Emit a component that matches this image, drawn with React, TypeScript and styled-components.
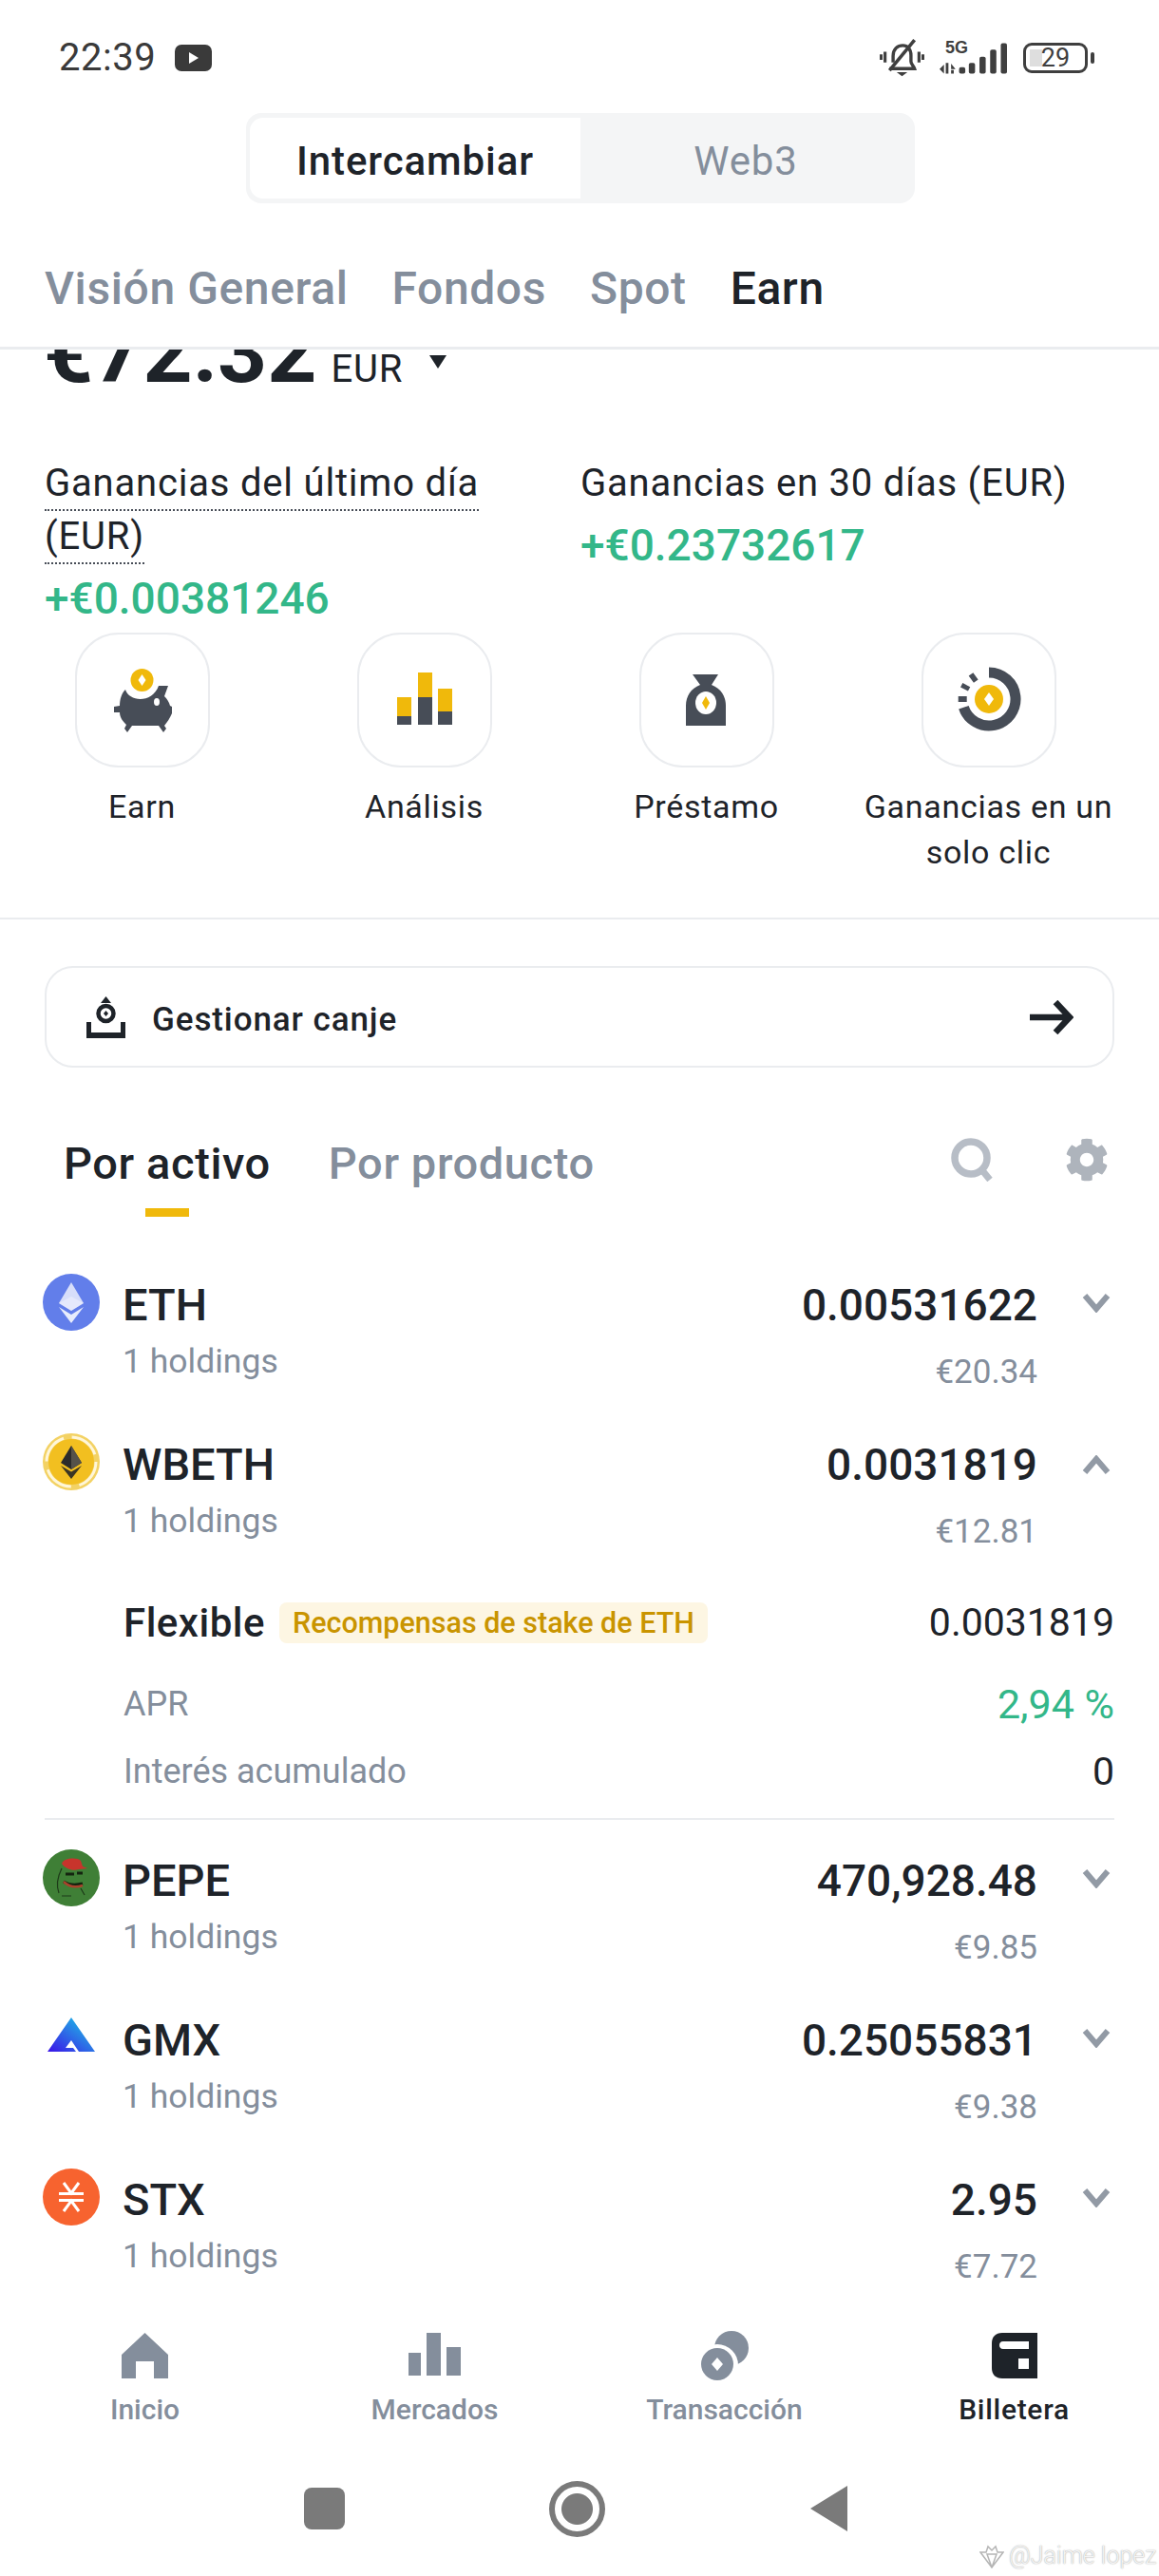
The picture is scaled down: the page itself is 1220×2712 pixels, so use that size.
import React, { FC } from 'react'
import styled, { createGlobalStyle } from 'styled-components'
import { FaCog } from 'react-icons/fa'

const GlobalStyle = createGlobalStyle`
  html, body { margin:0; padding:0; background:#fff; }
  body { font-family:Roboto,"Noto Sans",sans-serif; color:#1e2329; }
  * { box-sizing:border-box; }
`

const DARK = '#474d57'
const YELLOW = '#f0b90b'
const GREEN = '#33b789'

/* ---------- status bar icons ---------- */
const PlayBadge = () => (
  <svg width="39" height="28" viewBox="0 0 39 28">
    <rect width="39" height="28" rx="7" fill="#3a3a3a" />
    <path d="M15 8 L25 14 L15 20Z" fill="#fff" />
  </svg>
)

const MutedBell = () => (
  <svg width="47" height="42" viewBox="0 0 50 42" fill="none" stroke="#3f3f3f">
    <path d="M15 26 V19 C15 11 20 7 26 7 C31 7 35 11 35 18 V25 C35 28 38 30 39 33 H11" strokeWidth="3.6" />
    <path d="M39 1 L11 35" strokeWidth="3.8" />
    <path d="M19 37 H31 L25 41.5Z" fill="#3f3f3f" stroke="none" />
    <path d="M6 14 V26 M1.5 17 V23 M44 14 V26 M48.5 17 V23" strokeWidth="3.4" />
  </svg>
)

const SignalIcon = () => (
  <svg width="71" height="33" viewBox="0 0 76 34" fill="#3f3f3f">
    <path d="M0 29 L5 24 V34Z M7 22 H10 V34 H7Z M13 23 L18 29 H13Z M13 30 H16 V34 H13Z" />
    <rect x="22" y="27" width="7" height="7" rx="2" />
    <rect x="33" y="22" width="7" height="12" rx="2" />
    <rect x="45" y="15" width="7" height="19" rx="2" />
    <rect x="57" y="7" width="7" height="27" rx="2" />
    <rect x="69" y="0" width="7" height="34" rx="2" />
  </svg>
)

/* ---------- action icons ---------- */
const PiggyIcon = () => (
  <svg width="96" height="96" viewBox="0 0 96 96">
    <path fill={DARK} d="M30 37 C34 50 58 52 65 33 L75 33 L71 44 C74 47 76 50 77 54 L79 55 L79 62 C77 67 74 71 71 75 L73 78 L70 82 L65 75 H37 L32 82 L29 78 L31 74 C27 70 24 66 24 61 L18 61 V55 L24 54 C24 47 26 41 30 37Z" />
    <ellipse cx="63" cy="50" rx="3" ry="4" fill="#fff" />
    <ellipse cx="47.5" cy="27" rx="12" ry="12" fill={YELLOW} />
    <path d="M47.5 21 L51.5 27 L47.5 33 L43.5 27Z" fill="#fff" />
  </svg>
)

const BarsIcon = () => (
  <svg width="96" height="96" viewBox="0 0 96 96">
    <rect x="19" y="45" width="15" height="20" fill={YELLOW} />
    <rect x="19" y="65" width="15" height="9" fill={DARK} />
    <rect x="41" y="19" width="15" height="26" fill={YELLOW} />
    <rect x="41" y="45" width="15" height="29" fill={DARK} />
    <rect x="62" y="36" width="15" height="24" fill={YELLOW} />
    <rect x="62" y="60" width="15" height="14" fill={DARK} />
  </svg>
)

const BagIcon = () => (
  <svg width="96" height="96" viewBox="0 0 96 96">
    <path fill={DARK} d="M33 21 H60 L53 32 C63 36 68 44 68 54 V75 H26 V54 C26 44 31 36 41 32Z" />
    <ellipse cx="47" cy="51" rx="11" ry="12" fill="#fff" />
    <path d="M47 44 L51 51 L47 58 L43 51Z" fill={YELLOW} />
  </svg>
)

const TargetIcon = () => (
  <svg width="96" height="96" viewBox="0 0 96 96" fill="none">
    <path d="M48 19 A28 28 0 1 1 21.4 55.7" stroke={DARK} strokeWidth="11" />
    <path d="M20.2 49.9 L20.2 44.1 M22 36.5 L24.3 32.2 M29.3 26.2 L34 22.8" stroke={DARK} strokeWidth="9" />
    <circle cx="48" cy="47" r="15" fill={YELLOW} />
    <path d="M48 40 L53 47 L48 54 L43 47Z" fill="#fff" />
  </svg>
)

const RedeemIcon = () => (
  <svg width="42" height="44" viewBox="0 0 42 44" fill="none">
    <path d="M20.5 0 L26 7 H15Z" fill="#1e2329" />
    <circle cx="20.5" cy="18" r="8" stroke="#1e2329" strokeWidth="4.5" />
    <path d="M20.5 15 L23 18 L20.5 21 L18 18Z" fill="#1e2329" />
    <path d="M0 27 H5 V38 H36 V27 H41 V44 H0Z" fill="#1e2329" />
  </svg>
)

const ArrowIcon = () => (
  <svg width="46" height="36" viewBox="0 0 46 36" fill="none" stroke="#1e2329" strokeWidth="6.5">
    <path d="M0 18 H41 M27 2 L42 18 L27 34" />
  </svg>
)

const SearchIcon = () => (
  <svg width="46" height="46" viewBox="0 0 46 46" fill="none" stroke="#b7bdc6">
    <circle cx="22" cy="21" r="17" strokeWidth="7.5" />
    <path d="M33 33 L42 44" strokeWidth="7" />
  </svg>
)

/* ---------- coin logos ---------- */
const EthCoin = () => (
  <svg width="60" height="60" viewBox="0 0 60 60">
    <circle cx="30" cy="30" r="30" fill="#627eea" />
    <path d="M30 9 L43 31 L30 39 L17 31Z" fill="#fff" opacity="0.75" />
    <path d="M30 24 L43 31 L30 39 L17 31Z" fill="#fff" opacity="0.35" />
    <path d="M17 35 L30 43 L43 35 L30 52Z" fill="#fff" opacity="0.85" />
  </svg>
)

const WbethCoin = () => (
  <svg width="60" height="60" viewBox="0 0 60 60">
    <circle cx="30" cy="30" r="30" fill="#f3d264" />
    <circle cx="30" cy="30" r="26" fill="none" stroke="#fff6d8" strokeWidth="3" strokeDasharray="32 8.8" />
    <circle cx="30" cy="30" r="24" fill="#f2bf20" />
    <path d="M30 13 L41 31 L30 38 L19 31Z" fill="#2b2b2b" />
    <path d="M30 13 L41 31 L30 38Z" fill="#55524a" />
    <path d="M19 34 L30 40.5 L41 34 L30 48Z" fill="#3a3524" />
  </svg>
)

const PepeCoin = () => (
  <svg width="60" height="60" viewBox="0 0 60 60">
    <circle cx="30" cy="30" r="30" fill="#3f7f36" />
    <path d="M20 15 C22 9 36 8 40 12 L42 18 L47 20 L38 21 C32 23 24 21 20 15Z" fill="#c8342c" />
    <path d="M24 26 H33 M36 25 H42 M22 34 C28 38 34 38 42 36" stroke="#14240f" strokeWidth="3" fill="none" />
    <path d="M22 34 C28 40 36 40 42 38" stroke="#a8432c" strokeWidth="2.5" fill="none" />
    <path d="M20 20 C15 30 14 38 17 46 M20 49 H30 M40 41 L44 48" stroke="#1d3a18" strokeWidth="1.2" fill="none" />
  </svg>
)

const GmxCoin = () => (
  <svg width="60" height="60" viewBox="0 0 60 60">
    <defs>
      <linearGradient id="gmxFill" x1="0" y1="1" x2="1" y2="0">
        <stop offset="0" stopColor="#3a12e8" />
        <stop offset="0.55" stopColor="#2a7ce6" />
        <stop offset="1" stopColor="#14d2e6" />
      </linearGradient>
    </defs>
    <path d="M30 9 L55 45 H38 L30 33 L24 41 H32 L35 45 H5Z" fill="url(#gmxFill)" />
  </svg>
)

const StxCoin = () => (
  <svg width="60" height="60" viewBox="0 0 60 60" fill="none" stroke="#fff" strokeWidth="3">
    <circle cx="30" cy="30" r="30" fill="#f7632f" stroke="none" />
    <path d="M17 26.5 H43 M17 33.5 H43 M22 15 L30 26 L38 15 M22 45 L30 34 L38 45" />
  </svg>
)

const Chevron: FC<{ up?: boolean }> = ({ up }) => (
  <svg width="30" height="20" viewBox="0 0 30 20" fill="none" stroke="#929aa5" strokeWidth="6">
    <path d={up ? 'M3 18 L15 4 L27 18' : 'M3 2 L15 16 L27 2'} />
  </svg>
)

/* ---------- bottom nav icons ---------- */
const HomeIcon = () => (
  <svg width="49" height="48" viewBox="0 0 49 48">
    <path d="M24.5 0 L49 23 V48 H34 V30 H15 V48 H0 V23Z" fill="#848e9c" />
  </svg>
)

const MarketsIcon = () => (
  <svg width="55" height="48" viewBox="0 0 55 48" fill="#848e9c">
    <rect x="0" y="21" width="13" height="24" />
    <rect x="19" y="0" width="15" height="45" />
    <rect x="40" y="15" width="15" height="30" />
  </svg>
)

const TradeIcon = () => (
  <svg width="51" height="52" viewBox="0 0 51 52">
    <circle cx="33" cy="18" r="18" fill="#848e9c" />
    <circle cx="18" cy="36" r="22" fill="#fff" />
    <circle cx="18" cy="35" r="17" fill="#848e9c" />
    <path d="M18 28 L24 35 L18 42 L12 35Z" fill="#fff" />
  </svg>
)

const WalletIcon = () => (
  <svg width="48" height="48" viewBox="0 0 48 48">
    <path d="M11 0 H48 V48 H11 C4 48 0 44 0 37 V11 C0 4 4 0 11 0Z" fill="#1e2329" />
    <path d="M12 9 H39 V17 H12 C9 17 8 15 8 13 C8 11 9 9 12 9Z" fill="#fff" />
    <rect x="28" y="27" width="11" height="11" fill="#fff" />
  </svg>
)

const assets = [
  { name: 'ETH', amount: '0.00531622', value: '€20.34', logo: <EthCoin /> },
  { name: 'WBETH', amount: '0.0031819', value: '€12.81', logo: <WbethCoin />, open: true },
  { name: 'PEPE', amount: '470,928.48', value: '€9.85', logo: <PepeCoin /> },
  { name: 'GMX', amount: '0.25055831', value: '€9.38', logo: <GmxCoin /> },
  { name: 'STX', amount: '2.95', value: '€7.72', logo: <StxCoin /> },
]

const actions = [
  { label: 'Earn', icon: <PiggyIcon /> },
  { label: 'Análisis', icon: <BarsIcon /> },
  { label: 'Préstamo', icon: <BagIcon /> },
  { label: 'Ganancias en un solo clic', icon: <TargetIcon /> },
]

const navItems = [
  { label: 'Inicio', icon: <HomeIcon /> },
  { label: 'Mercados', icon: <MarketsIcon /> },
  { label: 'Transacción', icon: <TradeIcon /> },
  { label: 'Billetera', icon: <WalletIcon />, active: true },
]

const App: FC = () => {
  return (
    <Page>
      <GlobalStyle />
      <StatusBar>
        <StatusLeft>
          <Clock>22:39</Clock>
          <PlayBadge />
        </StatusLeft>
        <StatusRight>
          <MutedBell />
          <SignalWrap>
            <FiveG>5G</FiveG>
            <SignalIcon />
          </SignalWrap>
          <Battery>
            <BatteryFill />
            <BatteryText>29</BatteryText>
          </Battery>
          <BatteryNub />
        </StatusRight>
      </StatusBar>

      <Segment>
        <SegmentItem $active>Intercambiar</SegmentItem>
        <SegmentItem>Web3</SegmentItem>
      </Segment>

      <MainTabs>
        <MainTab>Visión General</MainTab>
        <MainTab>Fondos</MainTab>
        <MainTab>Spot</MainTab>
        <MainTab $active>Earn</MainTab>
      </MainTabs>

      <Scroll>
        <Balance>
          <BalanceValue>€72.32</BalanceValue>
          <BalanceUnit>EUR</BalanceUnit>
          <Caret />
        </Balance>

        <Earnings>
          <EarningCol>
            <EarningLabel><Dotted>Ganancias del último día (EUR)</Dotted></EarningLabel>
            <EarningValue>+€0.00381246</EarningValue>
          </EarningCol>
          <EarningCol>
            <EarningLabel>Ganancias en 30 días (EUR)</EarningLabel>
            <EarningValue>+€0.23732617</EarningValue>
          </EarningCol>
        </Earnings>

        <Actions>
          {actions.map(a => (
            <Action key={a.label}>
              <ActionBox>{a.icon}</ActionBox>
              <ActionLabel>{a.label}</ActionLabel>
            </Action>
          ))}
        </Actions>

        <SectionLine />

        <RedeemCard>
          <RedeemLeft>
            <RedeemIcon />
            <RedeemText>Gestionar canje</RedeemText>
          </RedeemLeft>
          <ArrowIcon />
        </RedeemCard>

        <ListTabs>
          <ListTab>
            <ListTabText>Por activo</ListTabText>
            <TabMark />
          </ListTab>
          <ListTab>
            <ListTabText $muted>Por producto</ListTabText>
          </ListTab>
          <ListTools>
            <SearchIcon />
            <FaCog size={46} color="#aeb4bc" />
          </ListTools>
        </ListTabs>

        <AssetList>
          {assets.map(a => (
            <React.Fragment key={a.name}>
              <AssetRow>
                <LogoSlot>{a.logo}</LogoSlot>
                <AssetInfo>
                  <AssetName>{a.name}</AssetName>
                  <Holdings>1 holdings</Holdings>
                </AssetInfo>
                <AssetNumbers>
                  <AssetAmount>{a.amount}</AssetAmount>
                  <AssetValue>{a.value}</AssetValue>
                </AssetNumbers>
                <ChevronSlot $up={a.open}><Chevron up={a.open} /></ChevronSlot>
              </AssetRow>
              {a.open && (
                <Detail>
                  <DetailHead>
                    <FlexTitle>
                      <FlexName>Flexible</FlexName>
                      <Badge>Recompensas de stake de ETH</Badge>
                    </FlexTitle>
                    <DetailValue>0.0031819</DetailValue>
                  </DetailHead>
                  <DetailRow>
                    <DetailLabel>APR</DetailLabel>
                    <DetailValue $green>2,94 %</DetailValue>
                  </DetailRow>
                  <DetailRow>
                    <DetailLabel>Interés acumulado</DetailLabel>
                    <DetailValue>0</DetailValue>
                  </DetailRow>
                </Detail>
              )}
            </React.Fragment>
          ))}
        </AssetList>
      </Scroll>

      <BottomNav>
        {navItems.map(n => (
          <NavItem key={n.label}>
            <NavIcon>{n.icon}</NavIcon>
            <NavLabel $active={n.active}>{n.label}</NavLabel>
          </NavItem>
        ))}
      </BottomNav>

      <SystemNav>
        <SysKey><SysSquare /></SysKey>
        <SysKey><SysCircle /></SysKey>
        <SysKey>
          <svg width="40" height="48" viewBox="0 0 40 48"><path d="M39 0 V48 L0 24Z" fill="#7a7a7a" /></svg>
        </SysKey>
      </SystemNav>

      <Watermark>
        <svg width="26" height="26" viewBox="0 0 26 26" fill="none" stroke="#b5b5b5" strokeWidth="1.5">
          <path d="M13 25 L1 9 L7 9 L9 3 L13 7 L17 3 L19 9 L25 9Z M13 25 L8 11 H18Z" />
        </svg>
        <span>@Jaime lopez</span>
      </Watermark>
    </Page>
  )
}

export default App

const Page = styled.div`
  position:relative;
  width:1220px;
  height:2712px;
  overflow:hidden;
  background:#fff;
  display:flex;
  flex-direction:column;
`

const StatusBar = styled.div`
  height:119px;
  flex:none;
  padding:39px 68px 0 62px;
  display:flex;
  justify-content:space-between;
  align-items:flex-start;
`

const StatusLeft = styled.div`
  display:flex;
  align-items:center;
  gap:20px;
  height:44px;
`

const Clock = styled.span`
  font-size:40px;
  line-height:44px;
  letter-spacing:.5px;
  color:#3a3a3a;
`

const StatusRight = styled.div`
  display:flex;
  align-items:center;
  height:44px;
`

const SignalWrap = styled.div`
  position:relative;
  margin-left:16px;
  width:71px;
  height:33px;
`

const FiveG = styled.span`
  position:absolute;
  left:6px;
  top:-4px;
  font-family:"Liberation Sans",sans-serif;
  font-size:18px;
  line-height:18px;
  font-weight:700;
  color:#3f3f3f;
`

const Battery = styled.div`
  position:relative;
  margin-left:17px;
  width:68px;
  height:32px;
  border:3.5px solid #3f3f3f;
  border-radius:9px;
  display:flex;
  align-items:center;
  justify-content:center;
`

const BatteryFill = styled.div`
  position:absolute;
  left:4px;
  top:4px;
  bottom:4px;
  width:13px;
  background:#dedede;
`

const BatteryText = styled.span`
  position:relative;
  font-size:27px;
  line-height:25px;
  color:#3f3f3f;
`

const BatteryNub = styled.div`
  margin-left:3px;
  width:4px;
  height:12px;
  border-radius:2px;
  background:#3f3f3f;
`

const Segment = styled.div`
  flex:none;
  margin-left:259px;
  width:704px;
  height:95px;
  padding:5px 4px;
  background:#f4f5f6;
  border-radius:16px;
  display:grid;
  grid-template-columns:348px 348px;
`

const SegmentItem = styled.div<{ $active?: boolean }>`
  display:flex;
  align-items:center;
  justify-content:center;
  padding-top:6px;
  font-size:42px;
  letter-spacing:.9px;
  font-weight:${({ $active }) => ($active ? 500 : 400)};
  color:${({ $active }) => ($active ? '#1e2329' : '#848e9c')};
  background:${({ $active }) => ($active ? '#fff' : 'transparent')};
  border-radius:14px 0 0 14px;
`

const MainTabs = styled.div`
  flex:none;
  height:154px;
  padding:60px 0 0 47px;
  display:flex;
  gap:46px;
  border-bottom:3px solid #eaecef;
`

const MainTab = styled.div<{ $active?: boolean }>`
  font-size:48px;
  line-height:60px;
  letter-spacing:.6px;
  font-weight:500;
  white-space:nowrap;
  color:${({ $active }) => ($active ? '#1e2329' : '#848e9c')};
`

const Scroll = styled.div`
  flex:none;
  height:2083px;
  overflow:hidden;
`

const Balance = styled.div`
  margin:-47px 0 60px 46px;
  height:100px;
  display:flex;
  align-items:baseline;
`

const BalanceValue = styled.span`
  font-size:91px;
  line-height:100px;
  font-weight:700;
`

const BalanceUnit = styled.span`
  margin-left:15px;
  font-size:40px;
  line-height:100px;
  letter-spacing:.8px;
`

const Caret = styled.span`
  margin-left:28px;
  width:0;
  height:0;
  border-left:9px solid transparent;
  border-right:9px solid transparent;
  border-top:14px solid #1e2329;
  align-self:flex-start;
  margin-top:53px;
`

const Earnings = styled.div`
  padding:0 47px;
  display:grid;
  grid-template-columns:564px 1fr;
`

const EarningCol = styled.div`
  &:first-child { padding-right:64px; }
`

const EarningLabel = styled.div`
  font-size:40px;
  line-height:56px;
  letter-spacing:.8px;
  white-space:normal;
`

const Dotted = styled.span`
  padding-bottom:4px;
  border-bottom:2px dotted #474d57;
  box-decoration-break:clone;
  -webkit-box-decoration-break:clone;
`

const EarningValue = styled.div`
  margin-top:11px;
  font-size:46px;
  line-height:52px;
  font-weight:500;
  color:${GREEN};
`

const Actions = styled.div`
  margin-top:10px;
  padding-left:1px;
  display:grid;
  grid-template-columns:repeat(4,297px);
`

const Action = styled.div`
  display:flex;
  flex-direction:column;
  align-items:center;
`

const ActionBox = styled.div`
  width:142px;
  height:142px;
  border:2px solid #eaecef;
  border-radius:46px;
  display:flex;
  align-items:center;
  justify-content:center;
`

const ActionLabel = styled.div`
  margin-top:17px;
  max-width:280px;
  font-size:34px;
  line-height:48px;
  letter-spacing:.7px;
  text-align:center;
`

const SectionLine = styled.div`
  margin-top:45px;
  height:2px;
  background:#eaecef;
`

const RedeemCard = styled.div`
  margin:49px 47px 0;
  height:107px;
  padding:0 41px 0 42px;
  border:2px solid #eaecef;
  border-radius:30px;
  display:flex;
  align-items:center;
  justify-content:space-between;
`

const RedeemLeft = styled.div`
  display:flex;
  align-items:center;
  gap:27px;
`

const RedeemText = styled.span`
  padding-top:5px;
  font-size:35px;
  letter-spacing:.9px;
  font-weight:500;
`

const ListTabs = styled.div`
  margin-top:66px;
  padding:0 53px 0 67px;
  display:flex;
  align-items:flex-start;
  gap:61px;
`

const ListTab = styled.div`
  display:flex;
  flex-direction:column;
  align-items:center;
`

const ListTabText = styled.div<{ $muted?: boolean }>`
  font-size:47px;
  line-height:70px;
  letter-spacing:.6px;
  font-weight:500;
  white-space:nowrap;
  color:${({ $muted }) => ($muted ? '#848e9c' : '#1e2329')};
`

const TabMark = styled.div`
  margin-top:12px;
  width:46px;
  height:9px;
  background:${YELLOW};
`

const ListTools = styled.div`
  margin-left:auto;
  margin-top:8px;
  display:flex;
  align-items:center;
  gap:75px;
`

const AssetList = styled.div`
  margin-top:60px;
`

const AssetRow = styled.div`
  height:168px;
  padding:0 47px 0 45px;
  display:flex;
  align-items:flex-start;
`

const LogoSlot = styled.div`
  flex:none;
  width:84px;
  height:60px;
`

const AssetInfo = styled.div`
  flex:1;
`

const AssetName = styled.div`
  font-size:47px;
  line-height:66px;
  font-weight:500;
`

const Holdings = styled.div`
  font-size:35.5px;
  line-height:52px;
  color:#848e9c;
`

const AssetNumbers = styled.div`
  text-align:right;
`

const AssetAmount = styled.div`
  font-size:46px;
  line-height:66px;
  font-weight:500;
`

const AssetValue = styled.div`
  margin-top:12px;
  font-size:35px;
  line-height:52px;
  color:#848e9c;
`

const ChevronSlot = styled.div<{ $up?: boolean }>`
  flex:none;
  width:81px;
  padding:${({ $up }) => ($up ? '23px' : '21px')} 4px 0 0;
  display:flex;
  justify-content:flex-end;
`

const Detail = styled.div`
  margin:0 47px 31px;
  padding:0 0 14px 83px;
  border-bottom:2px solid #eaecef;
`

const DetailHead = styled.div`
  height:62px;
  margin-bottom:19px;
  display:flex;
  align-items:center;
  justify-content:space-between;
`

const FlexTitle = styled.div`
  display:flex;
  align-items:center;
  gap:15px;
`

const FlexName = styled.span`
  font-size:42px;
  letter-spacing:.5px;
  font-weight:500;
`

const Badge = styled.span`
  height:43px;
  padding:0 14px;
  display:flex;
  align-items:center;
  font-size:30.5px;
  font-weight:500;
  white-space:nowrap;
  color:#c99400;
  background:#fdf6e3;
  border-radius:8px;
`

const DetailRow = styled.div`
  height:71px;
  display:flex;
  align-items:center;
  justify-content:space-between;
`

const DetailLabel = styled.span`
  font-size:36px;
  color:#848e9c;
`

const DetailValue = styled.span<{ $green?: boolean }>`
  font-size:${({ $green }) => ($green ? '43px' : '41px')};
  color:${({ $green }) => ($green ? GREEN : '#1e2329')};
`

const BottomNav = styled.div`
  flex:none;
  padding-top:3px;
  display:grid;
  grid-template-columns:repeat(4,1fr);
`

const NavItem = styled.div`
  display:flex;
  flex-direction:column;
  align-items:center;
`

const NavIcon = styled.div`
  height:52px;
  display:flex;
  align-items:center;
`

const NavLabel = styled.div<{ $active?: boolean }>`
  margin-top:11px;
  font-size:30px;
  line-height:40px;
  font-weight:500;
  letter-spacing:${({ $active }) => ($active ? '.7px' : '0')};
  color:${({ $active }) => ($active ? '#1e2329' : '#848e9c')};
`

const SystemNav = styled.div`
  flex:none;
  margin-top:54px;
  padding-left:208px;
  height:60px;
  display:grid;
  grid-template-columns:repeat(3,266px);
`

const SysKey = styled.div`
  display:flex;
  align-items:center;
  justify-content:center;
`

const SysSquare = styled.div`
  width:43px;
  height:44px;
  border-radius:8px;
  background:#7a7a7a;
`

const SysCircle = styled.div`
  width:59px;
  height:59px;
  border-radius:50%;
  border:6px solid #7a7a7a;
  background:radial-gradient(circle,#7a7a7a 0 16px,#fff 17px);
`

const Watermark = styled.div`
  position:absolute;
  left:1031px;
  top:2677px;
  display:flex;
  align-items:center;
  gap:5px;
  font-size:25px;
  line-height:28px;
  font-weight:300;
  white-space:nowrap;
  color:#f4f4f4;
  text-shadow:0 0 1.5px #8a8a8a;
`
